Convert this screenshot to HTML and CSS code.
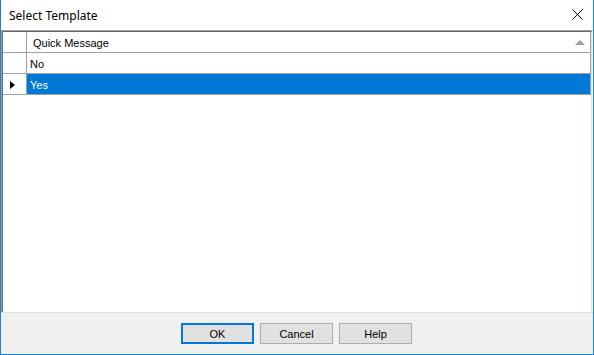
FILE: index.html
```html
<!DOCTYPE html>
<html lang="en">
<head>
    <meta charset="UTF-8">
    <title>Select Template</title>
    <link rel="stylesheet" href="styles.css">
</head>
<body>
    <div class="window">
        <!-- Title bar -->
        <div class="titlebar">
            <span class="title">Select Template</span>
            <span class="close">
                <svg width="11" height="11" viewBox="0 0 11 11"><path d="M0.5 0.5 L10.5 10.5 M10.5 0.5 L0.5 10.5" stroke="#000" stroke-width="1" fill="none"/></svg>
            </span>
        </div>

        <!-- Grid -->
        <div class="grid">
            <div class="grid-inner">
                <div class="row head">
                    <div class="rowhead"></div>
                    <div class="cell">
                        <span>Quick Message</span>
                        <span class="sort"></span>
                    </div>
                </div>
                <div class="row">
                    <div class="rowhead"></div>
                    <div class="cell">No</div>
                </div>
                <div class="row selected">
                    <div class="rowhead"><span class="arrow"></span></div>
                    <div class="cell">Yes</div>
                </div>
            </div>
        </div>

        <!-- Buttons -->
        <div class="footer">
            <button class="btn default">OK</button>
            <button class="btn">Cancel</button>
            <button class="btn">Help</button>
        </div>
    </div>
</body>
</html>
```

FILE: styles.css
```css
/* dialog */
body { margin: 0; background: #fff; }
.window { width: 594px; height: 355px; box-sizing: border-box; border: 1px solid #1883d7; border-top: none; display: flex; flex-direction: column; font-family: "Liberation Sans", Arial, sans-serif; font-size: 11px; color: #000; }
.titlebar { height: 30px; flex: none; display: flex; align-items: center; justify-content: space-between; background: #fff; }
.title { font-family: "Noto Sans", "Open Sans", sans-serif; font-size: 12px; padding-left: 8px; }
.close { width: 11px; height: 11px; margin-right: 10px; margin-top: -1px; }
.close svg { display: block; }

.grid { flex: 1; border-top: 1px solid #a0a0a0; border-left: 1px solid #a0a0a0; border-right: 1px solid #fff; background: #fff; min-height: 0; }
.grid-inner { height: 100%; box-sizing: border-box; border-top: 1px solid #696969; border-left: 1px solid #696969; border-right: 1px solid #e3e3e3; }
.row { display: flex; height: 21px; box-sizing: border-box; }
.rowhead { width: 24px; flex: none; box-sizing: border-box; border-right: 1px solid #a0a0a0; border-bottom: 1px solid #a0a0a0; display: flex; align-items: center; padding-left: 7px; }
.cell { flex: 1; box-sizing: border-box; border-right: 1px solid #a0a0a0; border-bottom: 1px solid #a0a0a0; display: flex; align-items: center; padding-left: 3px; padding-top: 1px; }
.head .cell { padding-left: 6px; padding-right: 5px; justify-content: space-between; }
.sort { width: 0; height: 0; border-left: 5px solid transparent; border-right: 5px solid transparent; border-bottom: 5px solid #a0a0a0; }
.selected .cell { background: #0078d7; color: #fff; }
.arrow { width: 0; height: 0; border-top: 4px solid transparent; border-bottom: 4px solid transparent; border-left: 5px solid #000; margin-top: 1px; }

.footer { height: 42px; flex: none; box-sizing: border-box; border-top: 1px solid #dfdfdf; background: #f0f0f0; display: flex; justify-content: center; align-items: flex-start; gap: 6px; padding-top: 10px; padding-right: 1px; }
.btn { width: 73px; height: 21px; box-sizing: border-box; border: 1px solid #adadad; background: #e1e1e1; font-family: "Liberation Sans", Arial, sans-serif; font-size: 11px; color: #000; padding: 0; }
.btn.default { border: 2px solid #0078d7; }
```
